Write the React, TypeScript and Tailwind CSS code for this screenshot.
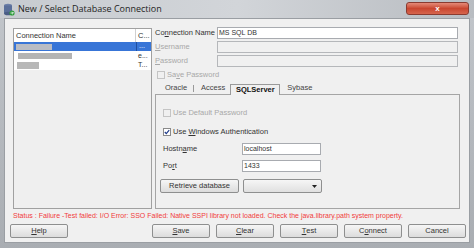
import React from "react";

const font = { fontFamily: '"Liberation Sans", Arial, sans-serif' };

function Btn({ children, w = "w-[58px]" }: { children: React.ReactNode; w?: string }) {
  return (
    <div
      className={`${w} h-[14px] flex items-center justify-center rounded-[2px] border border-[#8e8f8f] bg-gradient-to-b from-[#f6f6f6] to-[#dcdcdc] text-[7.5px] text-[#333]`}
    >
      {children}
    </div>
  );
}

function Check({ checked, disabled, children }: { checked?: boolean; disabled?: boolean; children: React.ReactNode }) {
  return (
    <div className="flex items-center gap-[2px] h-[10px]">
      <div
        className={`w-[8px] h-[8px] border flex items-center justify-center ${
          disabled ? "border-[#c4c4c4] bg-[#f0f0f0]" : "border-[#8a8a8a] bg-white"
        }`}
      >
        {checked && (
          <svg width="6" height="6" viewBox="0 0 6 6">
            <path d="M0.8 3 L2.3 4.6 L5.2 1.2" stroke="#1e3a8a" strokeWidth="1.2" fill="none" />
          </svg>
        )}
      </div>
      <span className={`text-[7.5px] ${disabled ? "text-[#a8a8a8]" : "text-[#333]"}`}>{children}</span>
    </div>
  );
}

export default function App() {
  return (
    <div
      style={font}
      className="w-[474px] h-[248px] overflow-hidden flex flex-col bg-gradient-to-b from-[#c2c6cb] to-[#a9adb2]"
    >
      {/* title bar */}
      <div className="h-[18px] flex items-center relative shrink-0 bg-gradient-to-r from-[#c7cbd0] via-[#d2d5d9] to-[#b8bcc1]">
        <div className="ml-[3px] w-[12px] h-[13px] relative">
          <svg width="12" height="13" viewBox="0 0 12 13">
            <ellipse cx="5" cy="2.5" rx="4" ry="1.8" fill="#6c7fa8" />
            <rect x="1" y="2.5" width="8" height="8" fill="#5a6f9a" />
            <ellipse cx="5" cy="10.5" rx="4" ry="1.8" fill="#4a5d85" />
            <circle cx="9" cy="10" r="2.6" fill="#2e9b3c" />
            <path d="M7.6 10 h2.6 M9.2 8.8 l1.2 1.2 l-1.2 1.2" stroke="white" strokeWidth="0.8" fill="none" />
          </svg>
        </div>
        <span className="ml-[3px] text-[9px] text-[#1e1e1e]" style={{ fontFamily: '"Open Sans", "Liberation Sans", sans-serif' }}>
          New / Select Database Connection
        </span>
        <div className="absolute right-[5px] top-[2px] w-[63px] h-[13px] rounded-[3px] border border-[#8a3b30] bg-gradient-to-b from-[#e48a78] via-[#c9462f] to-[#d6654d] flex items-center justify-center">
          <span className="text-white text-[8px] font-bold leading-none">x</span>
        </div>
      </div>

      {/* body */}
      <div className="flex-1 mx-[4px] mb-[5px] bg-[#f0f0f0] border border-[#9a9ea3] flex flex-col">
        <div className="flex mt-[9px] ml-[8px] h-[181px]">
          {/* left list */}
          <div className="w-[139px] h-full border border-[#a0a0a0] bg-[#efefef] flex flex-col">
            <div className="bg-white">
              <div className="flex h-[13px] items-center text-[7.5px] text-[#333]">
                <div className="w-[122px] pl-[2px] border-r border-[#d0d0d0] h-full flex items-center">Connection Name</div>
                <div className="pl-[2px]">C...</div>
              </div>
              <div className="flex h-[9px] text-[7px]">
                <div className="w-[122px] bg-[#3875d7] flex items-center pl-[2px]">
                  <div className="w-[36px] h-[6px] bg-[#b9bcc4] blur-[0.6px]" />
                </div>
                <div className="flex-1 bg-[#3875d7] text-white pl-[2px] leading-[8px] border-l border-[#1f4fa0]">...</div>
              </div>
              <div className="flex h-[9px] text-[7px] text-[#333]">
                <div className="w-[122px] flex items-center pl-[4px]">
                  <div className="w-[54px] h-[6px] bg-[#b4b4b4] blur-[0.6px]" />
                </div>
                <div className="pl-[2px] leading-[9px]">e...</div>
              </div>
              <div className="flex h-[10px] text-[7px] text-[#333]">
                <div className="w-[122px] flex items-center pl-[3px]">
                  <div className="w-[22px] h-[7px] bg-[#b8b8b8] blur-[0.6px]" />
                </div>
                <div className="pl-[2px] leading-[9px]">T...</div>
              </div>
            </div>
          </div>

          {/* right form */}
          <div className="ml-[3px] w-[305px] flex flex-col">
            <div className="flex items-center h-[12px] -mt-[1px]">
              <span className="w-[62px] text-[7.5px] text-[#333]">
                Co<u>n</u>nection Name
              </span>
              <div className="w-[241px] h-[12px] bg-white border border-[#a8abb0] text-[7px] text-[#333] pl-[1px] leading-[10px]">
                MS SQL DB
              </div>
            </div>
            <div className="flex items-center h-[12px] mt-[2px]">
              <span className="w-[62px] text-[7.5px] text-[#a8a8a8]">
                <u>U</u>sername
              </span>
              <div className="w-[241px] h-[12px] bg-[#f0f0f0] border border-[#b5b7ba]" />
            </div>
            <div className="flex items-center h-[12px] mt-[2px]">
              <span className="w-[62px] text-[7.5px] text-[#a8a8a8]">
                <u>P</u>assword
              </span>
              <div className="w-[241px] h-[12px] bg-[#f0f0f0] border border-[#b5b7ba]" />
            </div>
            <div className="mt-[3px] ml-[2px]">
              <Check disabled>
                Sa<u>v</u>e Password
              </Check>
            </div>
            {/* tabs */}
            <div className="mt-[2px] flex items-end h-[12px] text-[7.5px] text-[#444]">
              <span className="ml-[10px] mb-[1px]">Oracle</span>
              <span className="ml-[6px] mb-[2px] w-px h-[7px] bg-[#999]" />
              <span className="ml-[7px] mb-[1px]">Access</span>
              <div className="ml-[5px] w-[50px] h-[11px] border border-b-0 border-[#9a9a9a] bg-[#f0f0f0] flex items-center justify-center font-bold text-[#111] -mb-px relative z-10">
                SQLServer
              </div>
              <span className="ml-[7px] mb-[1px]">Sybase</span>
            </div>
            {/* tab panel */}
            <div className="w-[305px] flex-1 border border-[#a5a5a5] flex flex-col pl-[7px]">
              <div className="mt-[13px]">
                <Check disabled>Use Default Password</Check>
              </div>
              <div className="mt-[9px]">
                <Check checked>
                  Use <u>W</u>indows Authentication
                </Check>
              </div>
              <div className="mt-[6px] flex items-center h-[12px]">
                <span className="w-[79px] text-[7.5px] text-[#333]">
                  Hostn<u>a</u>me
                </span>
                <div className="w-[79px] h-[12px] bg-white border border-[#a8abb0] text-[7px] text-[#333] pl-[1px] leading-[10px]">
                  localhost
                </div>
              </div>
              <div className="mt-[5px] flex items-center h-[12px]">
                <span className="w-[79px] text-[7.5px] text-[#333]">
                  Po<u>r</u>t
                </span>
                <div className="w-[79px] h-[12px] bg-white border border-[#a8abb0] text-[7px] text-[#333] pl-[1px] leading-[10px]">
                  1433
                </div>
              </div>
              <div className="mt-[7px] -ml-[3px] flex items-center gap-[4px]">
                <Btn w="w-[79px]">Retrieve database</Btn>
                <div className="w-[79px] h-[14px] rounded-[2px] border border-[#8e8f8f] bg-gradient-to-b from-[#f6f6f6] to-[#e0e0e0] flex items-center justify-end pr-[4px]">
                  <svg width="5" height="3" viewBox="0 0 5 3">
                    <path d="M0 0 H5 L2.5 3 Z" fill="#222" />
                  </svg>
                </div>
              </div>
            </div>
          </div>
        </div>

        {/* status */}
        <div className="ml-[8px] mt-[2px] h-[11px] flex items-center text-[7px] text-[#f03c3c] whitespace-nowrap">
          Status : Failure -Test failed: I/O Error: SSO Failed: Native SSPI library not loaded. Check the java.library.path system property.
        </div>

        {/* buttons */}
        <div className="ml-[5px] mt-[2px] flex items-center">
          <Btn>
            <u>H</u>elp
          </Btn>
          <div className="ml-[84px] flex gap-[6px]">
            <Btn>
              <u>S</u>ave
            </Btn>
            <Btn>
              <u>C</u>lear
            </Btn>
            <Btn>
              <u>T</u>est
            </Btn>
            <Btn>
              C<u>o</u>nnect
            </Btn>
            <Btn>Cancel</Btn>
          </div>
        </div>
      </div>
    </div>
  );
}
